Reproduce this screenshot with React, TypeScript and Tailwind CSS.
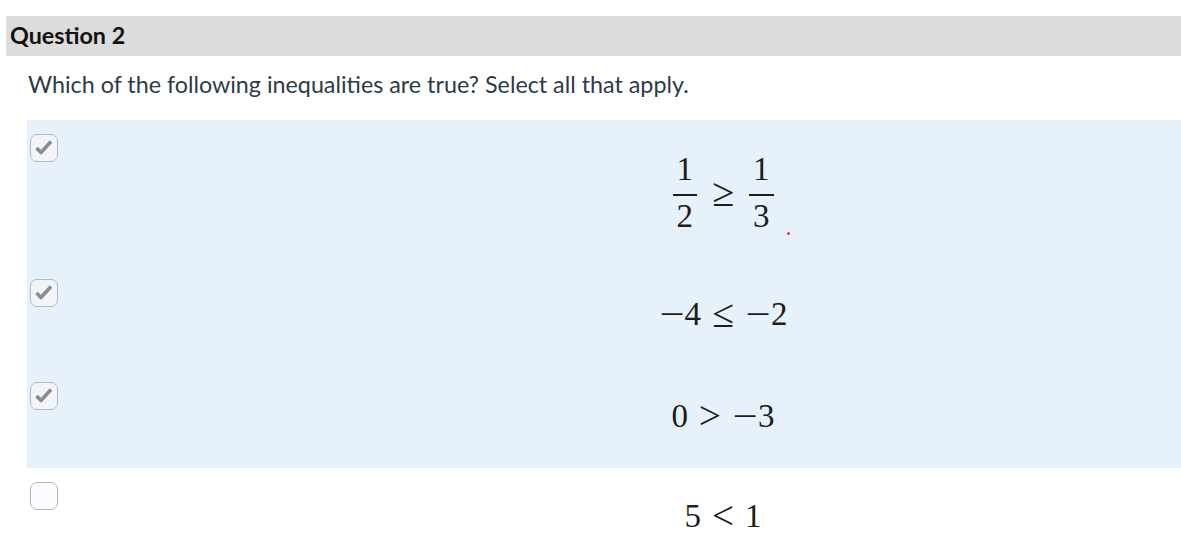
import React from "react";

const MINUS = "\u2212";

function Checkbox({ checked }: { checked: boolean }) {
  return (
    <div
      className={
        "w-[28px] h-[28px] rounded-[7px] border-[1.5px] border-[#b8b8b8] flex items-center justify-center shrink-0 " +
        (checked ? "bg-[#f1f5fb]" : "bg-[#fafcff]")
      }
    >
      {checked && (
        <svg width="22" height="22" viewBox="0 0 22 22">
          <polyline
            points="3.5,11 8,15.5 18,4.5"
            fill="none"
            stroke="#8c8c8c"
            strokeWidth="3.6"
            strokeLinejoin="round"
          />
        </svg>
      )}
    </div>
  );
}

function Frac({ num, den }: { num: string; den: string }) {
  return (
    <span className="flex flex-col items-stretch text-center">
      <span className="block h-[33px] px-[4px]">{num}</span>
      <span className="block h-[2px] mt-[8px] bg-[#1c1c1c]" />
      <span className="block h-[33px] mt-[4px] px-[4px]">{den}</span>
    </span>
  );
}

// minus sign widened toward the TeX glyph
function Minus() {
  return <span className="inline-block w-[26px] text-center scale-x-[1.35]">{MINUS}</span>;
}

function Rel({ children }: { children: React.ReactNode }) {
  return (
    <span className="inline-block w-[26px] mx-[9px] text-center scale-[1.2]">{children}</span>
  );
}

type Option = {
  checked: boolean;
  height: string;
  pad: string;
  math: React.ReactNode;
};

const options: Option[] = [
  {
    checked: true,
    height: "h-[145px]",
    pad: "pt-[33px]",
    math: (
      <span className="flex items-center">
        <Frac num="1" den="2" />
        <span className="inline-block w-[26px] mx-[13px] text-center scale-[1.22]">≥</span>
        <Frac num="1" den="3" />
        <span className="self-end w-[3px] h-[3px] bg-[#ff2a2a] rounded-full ml-[13px] mr-[-16px] mb-[-2px]" />
      </span>
    ),
  },
  {
    checked: true,
    height: "h-[103px]",
    pad: "pt-[33px]",
    math: (
      <span className="flex">
        <Minus />
        <span>4</span>
        <Rel>≤</Rel>
        <Minus />
        <span>2</span>
      </span>
    ),
  },
  {
    checked: true,
    height: "h-[100px]",
    pad: "pt-[32px]",
    math: (
      <span className="flex">
        <span>0</span>
        <Rel>&gt;</Rel>
        <Minus />
        <span>3</span>
      </span>
    ),
  },
  {
    checked: false,
    height: "h-[85px]",
    pad: "pt-[32px]",
    math: (
      <span className="flex">
        <span>5</span>
        <Rel>&lt;</Rel>
        <span>1</span>
      </span>
    ),
  },
];

export default function App() {
  return (
    <div className="w-[1181px] h-[553px] bg-white overflow-hidden pt-4 font-['Lato','Noto_Sans',sans-serif]">
      <div className="ml-[6px] h-10 bg-[#dcdcdc] flex items-center pl-[4px]">
        <h2 className="text-[23.3px] leading-none font-bold text-[#111]">Question 2</h2>
      </div>

      <p className="pl-[28px] pt-[14px] pb-[22px] text-[23.3px] leading-7 text-[#2d3b45]">
        Which of the following inequalities are true? Select all that apply.
      </p>

      <div className="ml-[27px]">
        {options.map((o, i) => (
          <div
            key={i}
            className={
              "flex " + o.height + " " + (o.checked ? "bg-[#e7f1fc]" : "bg-white")
            }
          >
            <div className="pl-[3px] pt-[14px]">
              <Checkbox checked={o.checked} />
            </div>
            <div
              className={
                "flex-1 pl-[207px] flex justify-center items-start text-[33px] leading-[33px] text-[#1c1c1c] font-['Liberation_Serif','DejaVu_Serif',serif] " +
                o.pad
              }
            >
              {o.math}
            </div>
          </div>
        ))}
      </div>
    </div>
  );
}
